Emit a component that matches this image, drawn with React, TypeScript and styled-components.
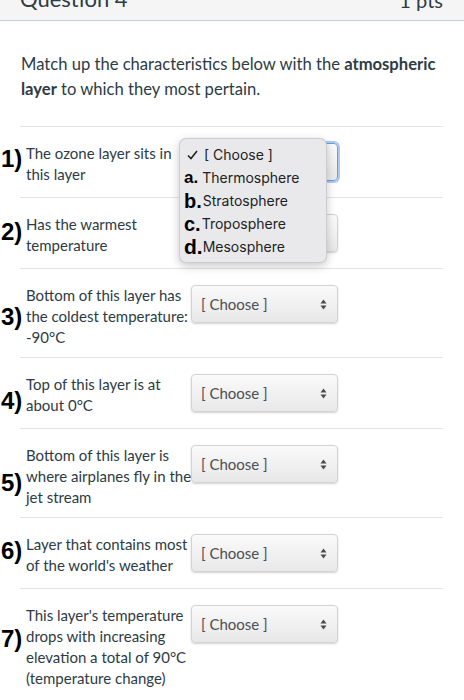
import React from "react";
import styled, { createGlobalStyle } from "styled-components";

const Global = createGlobalStyle`
  html, body { margin: 0; padding: 0; background: #ffffff; }
  body { font-family: Lato, "Open Sans", sans-serif; color: #2d3b45; overflow: hidden; }
`;

const Page = styled.div`
  width: 464px;
  height: 700px;
  overflow: hidden;
  background: #fff;
`;

const Header = styled.div`
  height: 20px;
  background: #f5f5f5;
  border-bottom: 1px solid #c7cdd1;
  display: flex;
  justify-content: space-between;
  align-items: flex-start;
  padding: 0 21px 0 20px;
  overflow: hidden;
`;

const Title = styled.div`
  font-size: 22px;
  line-height: 22px;
  margin-top: -12px;
  color: #2d3b45;
`;

const Points = styled.div`
  font-size: 20px;
  line-height: 20px;
  margin-top: -10px;
  color: #2d3b45;
`;

const Prompt = styled.p`
  margin: 31px 21px 24px 21px;
  font-size: 16.6px;
  line-height: 25px;
  color: #2d3b45;
`;

const List = styled.div`
  display: flex;
  flex-direction: column;
`;

const Row = styled.div`
  margin: 0 21px 0 20px;
  border-top: 1px solid #e2e5e8;
  padding: 16px 0 9px 6px;
  display: flex;
  align-items: flex-start;
`;

const Label = styled.div`
  position: relative;
  width: 169px;
  margin-right: -4px;
  flex: none;
  font-size: 15px;
  line-height: 21px;
  color: #2d3b45;
`;

const Num = styled.span<{ $dy: number }>`
  position: absolute;
  left: -25px;
  top: 50%;
  transform: translateY(calc(-50% + ${(p) => p.$dy}px));
  font-family: "Liberation Sans", Arial, sans-serif;
  font-weight: 700;
  font-size: 24px;
  line-height: 24px;
  color: #000;
`;

const SelectWrap = styled.div`
  position: relative;
  flex: none;
`;

const Select = styled.div<{ $focused?: boolean }>`
  width: 147px;
  height: 38px;
  box-sizing: border-box;
  margin-bottom: 7px;
  padding: 0 10px 0 9px;
  display: flex;
  align-items: center;
  justify-content: space-between;
  border-radius: 4px;
  border: 1px solid ${(p) => (p.$focused ? "#6b9be0" : "#d3d3d3")};
  background: linear-gradient(to bottom, #fafafa, #e8e8e8);
  box-shadow: ${(p) =>
    p.$focused
      ? "0 0 0 2px rgba(110,155,225,0.55)"
      : "0 1px 2px rgba(0,0,0,0.18)"};
  font-size: 15px;
  color: #4a4f54;
`;

const Arrows = styled.svg`
  width: 7px;
  height: 11px;
  display: block;
`;

const Menu = styled.div`
  position: absolute;
  left: -12px;
  top: -5px;
  width: 148px;
  box-sizing: border-box;
  padding: 4px 0 4px 4px;
  background: #e9e9eb;
  border: 1px solid rgba(0, 0, 0, 0.12);
  border-radius: 7px;
  box-shadow: 0 3px 10px rgba(0, 0, 0, 0.22);
  z-index: 2;
  display: flex;
  flex-direction: column;
`;

const Item = styled.div`
  height: 23px;
  display: flex;
  align-items: center;
  font-family: Inter, "Liberation Sans", sans-serif;
  font-size: 14px;
  color: #222;
  white-space: nowrap;
`;

const Check = styled.svg`
  width: 11px;
  height: 10px;
  margin: 0 6px 0 3px;
`;

const Letter = styled.span<{ $size: number; $gap: number }>`
  font-family: "Liberation Sans", Arial, sans-serif;
  font-weight: 700;
  font-size: ${(p) => p.$size}px;
  color: #000;
  margin-right: ${(p) => p.$gap}px;
  line-height: 1;
`;

const ArrowIcon = () => (
  <Arrows viewBox="0 0 7 11">
    <path d="M3.5 0.5 L6.5 4.5 L0.5 4.5 Z" fill="#4a4a4a" />
    <path d="M3.5 10.5 L6.5 6.5 L0.5 6.5 Z" fill="#4a4a4a" />
  </Arrows>
);

const rows = [
  { n: "1)", dy: -5, text: "The ozone layer sits in this layer", focused: true, menu: true },
  { n: "2)", dy: -3, text: "Has the warmest temperature" },
  { n: "3)", dy: 0, text: "Bottom of this layer has the coldest temperature: -90°C" },
  { n: "4)", dy: 6, text: "Top of this layer is at about 0°C" },
  { n: "5)", dy: 6, text: "Bottom of this layer is where airplanes fly in the jet stream" },
  { n: "6)", dy: -4, text: "Layer that contains most of the world's weather" },
  { n: "7)", dy: -8, text: "This layer's temperature drops with increasing elevation a total of 90°C (temperature change)" },
];

const options = [
  { l: "a.", size: 17, gap: 4, t: "Thermosphere" },
  { l: "b.", size: 20, gap: 1, t: "Stratosphere" },
  { l: "c.", size: 20, gap: 1, t: "Troposphere" },
  { l: "d.", size: 21, gap: 0, t: "Mesosphere" },
];

export default function App() {
  return (
    <Page>
      <Global />
      <Header>
        <Title>Question 4</Title>
        <Points>1 pts</Points>
      </Header>
      <Prompt>
        Match up the characteristics below with the <b>atmospheric layer</b> to which they most pertain.
      </Prompt>
      <List>
        {rows.map((r) => (
          <Row key={r.n}>
            <Label>
              <Num $dy={r.dy}>{r.n}</Num>
              {r.text}
            </Label>
            <SelectWrap>
              <Select $focused={r.focused}>
                <span>[ Choose ]</span>
                <ArrowIcon />
              </Select>
              {r.menu && (
                <Menu>
                  <Item>
                    <Check viewBox="0 0 11 10">
                      <path d="M1 5.5 L4 8.5 L10 1" fill="none" stroke="#222" strokeWidth="1.6" />
                    </Check>
                    [ Choose ]
                  </Item>
                  {options.map((o) => (
                    <Item key={o.l}>
                      <Letter $size={o.size} $gap={o.gap}>{o.l}</Letter>
                      {o.t}
                    </Item>
                  ))}
                </Menu>
              )}
            </SelectWrap>
          </Row>
        ))}
      </List>
    </Page>
  );
}
